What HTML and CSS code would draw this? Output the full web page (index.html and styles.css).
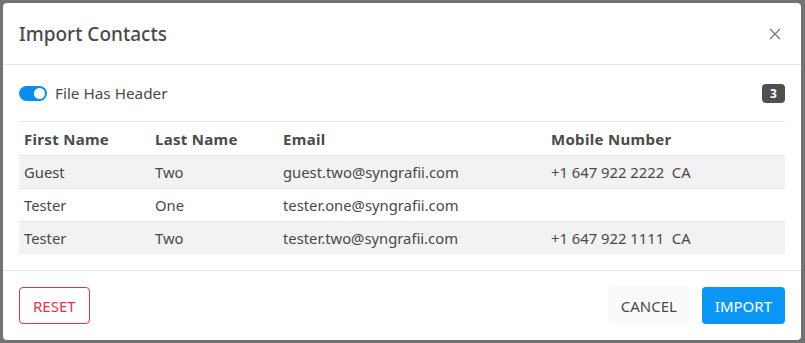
FILE: index.html
```html
<!DOCTYPE html>
<html lang="en">
<head>
    <meta charset="UTF-8">
    <meta name="viewport" content="width=device-width, initial-scale=1.0">
    <title>Import Contacts</title>
    <link rel="stylesheet" href="styles.css">
</head>
<body>
    <div class="modal">
        <div class="modal-header">
            <h2>Import Contacts</h2>
            <button class="close" type="button">
                <svg width="12" height="12" viewBox="0 0 12 12"><path d="M1 1L11 11M11 1L1 11" stroke="#777" stroke-width="1.3"/></svg>
            </button>
        </div>

        <div class="modal-body">
            <div class="options">
                <label class="switch">
                    <span class="track"><span class="knob"></span></span>
                    File Has Header
                </label>
                <span class="badge">3</span>
            </div>

            <table>
                <thead>
                    <tr>
                        <th class="c1">First Name</th>
                        <th class="c2">Last Name</th>
                        <th class="c3">Email</th>
                        <th>Mobile Number</th>
                    </tr>
                </thead>
                <tbody>
                    <tr>
                        <td>Guest</td>
                        <td>Two</td>
                        <td>guest.two@syngrafii.com</td>
                        <td>+1 647 922 2222&nbsp; CA</td>
                    </tr>
                    <tr>
                        <td>Tester</td>
                        <td>One</td>
                        <td>tester.one@syngrafii.com</td>
                        <td></td>
                    </tr>
                    <tr>
                        <td>Tester</td>
                        <td>Two</td>
                        <td>tester.two@syngrafii.com</td>
                        <td>+1 647 922 1111&nbsp; CA</td>
                    </tr>
                </tbody>
            </table>
        </div>

        <div class="modal-footer">
            <button class="btn btn-reset" type="button">RESET</button>
            <div class="actions">
                <button class="btn btn-cancel" type="button">CANCEL</button>
                <button class="btn btn-import" type="button">IMPORT</button>
            </div>
        </div>
    </div>
</body>
</html>
```

FILE: styles.css
```css
html, body {
    height: 100%;
}
body {
    margin: 0;
    padding: 3px 4px 3px 3px;
    box-sizing: border-box;
    background-color: #737373;
    font-family: "Noto Sans", "Open Sans", sans-serif;
    color: #494949;
}
.modal {
    background: #fff;
    border-radius: 4px;
    height: 100%;
    display: flex;
    flex-direction: column;
}
.modal-header {
    display: flex;
    align-items: center;
    justify-content: space-between;
    height: 61px;
    padding: 0 18px 0 16px;
    border-bottom: 1px solid #e6e6e6;
}
.modal-header h2 {
    margin: 0;
    font-size: 19px;
    font-weight: 500;
    color: #4a4a4a;
}
.close {
    background: none;
    border: none;
    padding: 2px;
    cursor: pointer;
    display: flex;
}
.modal-body {
    padding: 0 16px 16px;
    border-bottom: 1px solid #e6e6e6;
}
.options {
    display: flex;
    align-items: center;
    justify-content: space-between;
    height: 56px;
    border-bottom: 1px solid #e6e6e6;
}
.switch {
    display: flex;
    align-items: center;
    gap: 8px;
    font-size: 15.3px;
    color: #4a4a4a;
}
.track {
    width: 28px;
    height: 15px;
    border-radius: 8px;
    background: #0a8cf0;
    position: relative;
}
.knob {
    position: absolute;
    right: 2px;
    top: 2px;
    width: 11px;
    height: 11px;
    border-radius: 50%;
    background: #fff;
}
.badge {
    background: #4f4f4f;
    color: #fff;
    font-size: 12px;
    font-weight: bold;
    width: 23px;
    height: 19px;
    line-height: 19px;
    text-align: center;
    border-radius: 4px;
}
table {
    width: 100%;
    border-collapse: collapse;
    font-size: 14.8px;
}
th {
    text-align: left;
    font-weight: bold;
    font-size: 15px;
    letter-spacing: 0.3px;
    height: 33px;
    padding: 0 5px;
    color: #4a4a4a;
}
th.c1 { width: 121px; }
th.c2 { width: 118px; }
th.c3 { width: 258px; }
td {
    height: 32px;
    padding: 0 5px;
    border-top: 1px solid #e8e8e8;
}
tbody tr:nth-child(odd) {
    background: #f2f2f2;
}
.modal-footer {
    flex: 1;
    display: flex;
    align-items: center;
    justify-content: space-between;
    padding: 0 16px;
}
.actions {
    display: flex;
    gap: 12px;
}
.btn {
    font-family: inherit;
    font-size: 15px;
    height: 37px;
    padding: 0 13px;
    border-radius: 4px;
    cursor: pointer;
}
.btn-reset {
    background: #fff;
    color: #e0344a;
    border: 1px solid #e0344a;
}
.btn-cancel {
    background: #fafafa;
    color: #4a4a4a;
    border: none;
}
.btn-import {
    background: #0a96f5;
    color: #fff;
    border: none;
}
```
